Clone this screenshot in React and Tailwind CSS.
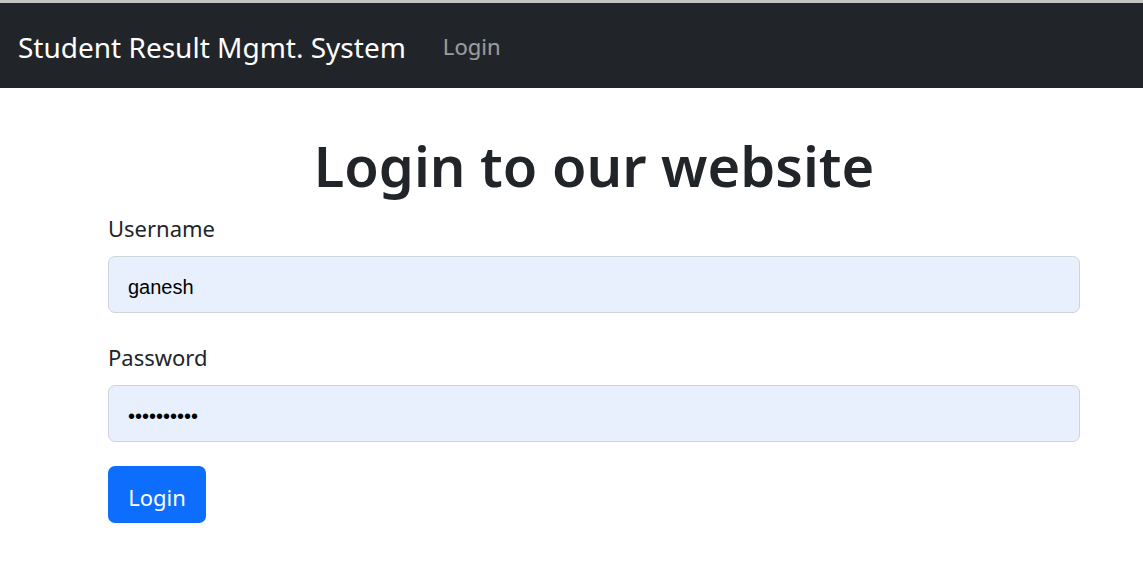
import React from 'react';

const App = () => {
  return (
    <div className="min-h-screen bg-white font-['Noto_Sans',sans-serif] text-[#212529]">
      <div className="h-[3px] bg-[#c4c4c4]"></div>
      <nav className="h-[85px] bg-[#212529] flex items-center px-[18px] pt-[2px]">
        <span className="text-[28px] text-white">Student Result Mgmt. System</span>
        <a href="#" className="ml-[37px] text-[22px] text-white/55">Login</a>
      </nav>

      <div className="ml-[108px] w-[972px]">
        <h1 className="mt-[41px] mb-[12px] text-center text-[56px] leading-[72px] font-semibold">
          Login to our website
        </h1>
        <form onSubmit={(e) => e.preventDefault()}>
          <label className="block text-[22px] leading-[30px] mb-[13px]">Username</label>
          <input
            type="text"
            defaultValue="ganesh"
            className="block w-full h-[57px] px-[19px] pt-[5px] bg-[#e8f0fe] border border-[#ced4da] rounded-[7px] text-[20px] text-black font-['Liberation_Sans',sans-serif] outline-none"
          />
          <label className="block mt-[29px] text-[22px] leading-[30px] mb-[13px]">Password</label>
          <input
            type="password"
            defaultValue="ganesh1234"
            className="block w-full h-[57px] px-[19px] pt-[5px] bg-[#e8f0fe] border border-[#ced4da] rounded-[7px] text-[20px] text-black font-['Liberation_Sans',sans-serif] outline-none"
          />
          <button
            type="submit"
            className="mt-[24px] h-[57px] w-[98px] pt-[5px] bg-[#0d6efd] text-white text-[22px] rounded-[7px]"
          >
            Login
          </button>
        </form>
      </div>
    </div>
  );
};

export default App;
